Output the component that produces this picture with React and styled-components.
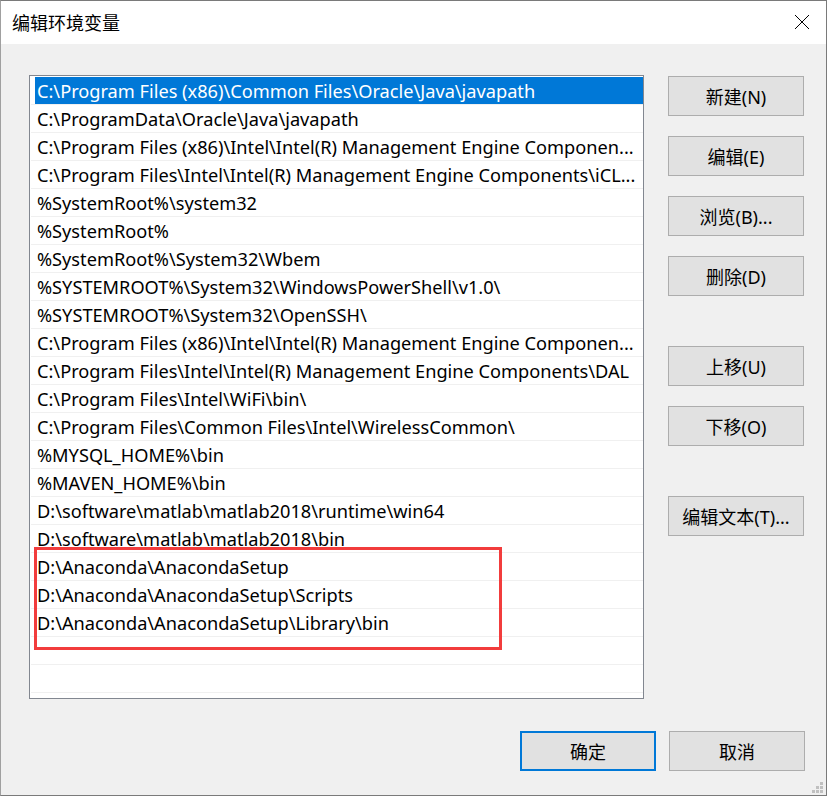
import React from 'react';
import styled, { createGlobalStyle } from 'styled-components';

const paths = [
  'C:\\Program Files (x86)\\Common Files\\Oracle\\Java\\javapath',
  'C:\\ProgramData\\Oracle\\Java\\javapath',
  'C:\\Program Files (x86)\\Intel\\Intel(R) Management Engine Componen...',
  'C:\\Program Files\\Intel\\Intel(R) Management Engine Components\\iCL...',
  '%SystemRoot%\\system32',
  '%SystemRoot%',
  '%SystemRoot%\\System32\\Wbem',
  '%SYSTEMROOT%\\System32\\WindowsPowerShell\\v1.0\\',
  '%SYSTEMROOT%\\System32\\OpenSSH\\',
  'C:\\Program Files (x86)\\Intel\\Intel(R) Management Engine Componen...',
  'C:\\Program Files\\Intel\\Intel(R) Management Engine Components\\DAL',
  'C:\\Program Files\\Intel\\WiFi\\bin\\',
  'C:\\Program Files\\Common Files\\Intel\\WirelessCommon\\',
  '%MYSQL_HOME%\\bin',
  '%MAVEN_HOME%\\bin',
  'D:\\software\\matlab\\matlab2018\\runtime\\win64',
  'D:\\software\\matlab\\matlab2018\\bin',
  'D:\\Anaconda\\AnacondaSetup',
  'D:\\Anaconda\\AnacondaSetup\\Scripts',
  'D:\\Anaconda\\AnacondaSetup\\Library\\bin',
  '',
  '',
];

const sideButtons = [
  { label: '新建(N)' },
  { label: '编辑(E)' },
  { label: '浏览(B)...' },
  { label: '删除(D)' },
  { label: '上移(U)', spaced: true },
  { label: '下移(O)' },
  { label: '编辑文本(T)...', spaced: true },
];

const App = () => (
  <>
    <GlobalStyle />
    <Window>
      <TitleBar>
        <Title>编辑环境变量</Title>
        <CloseIcon viewBox="0 0 16 16">
          <path d="M1 1 L15 15 M15 1 L1 15" stroke="#000" strokeWidth="1" fill="none" />
        </CloseIcon>
      </TitleBar>

      <Body>
        <Main>
          <ListBox>
            {paths.map((path, index) => (
              <Row key={`path_${index}`}>
                <Item selected={index === 0}>{path}</Item>
              </Row>
            ))}
            <Highlight />
          </ListBox>

          <ButtonColumn>
            {sideButtons.map(({ label, spaced }) => (
              <Button key={label} spaced={spaced}>{label}</Button>
            ))}
          </ButtonColumn>
        </Main>

        <Footer>
          <Button primary>确定</Button>
          <Button>取消</Button>
        </Footer>
      </Body>

      <Grip viewBox="0 0 11 11">
        <rect x="8" y="0" width="3" height="3" />
        <rect x="4" y="4" width="3" height="3" />
        <rect x="8" y="4" width="3" height="3" />
        <rect x="0" y="8" width="3" height="3" />
        <rect x="4" y="8" width="3" height="3" />
        <rect x="8" y="8" width="3" height="3" />
      </Grip>
    </Window>
  </>
);

const GlobalStyle = createGlobalStyle`
  html, body {
    margin: 0;
    padding: 0;
    background: #ffffff;
  }
  body {
    font-family: "Noto Sans", "Noto Sans CJK SC", sans-serif;
  }
`;

const Window = styled.div`
  position: relative;
  box-sizing: border-box;
  width: 827px;
  height: 796px;
  border: 1px solid #7a7a7a;
  border-left-color: #a0a0a0;
  background: #f0f0f0;
  display: flex;
  flex-direction: column;
`;

const TitleBar = styled.div`
  height: 43px;
  background: #ffffff;
  display: flex;
  align-items: center;
  justify-content: space-between;
  padding: 0 16px 0 11px;
`;

const Title = styled.div`
  font-size: 18px;
  color: #000;
  margin-top: -2px;
`;

const CloseIcon = styled.svg`
  width: 16px;
  height: 16px;
  margin-top: -1px;
`;

const Body = styled.div`
  flex: 1;
  display: flex;
  flex-direction: column;
  padding: 31px 21px 0 28px;
`;

const Main = styled.div`
  display: flex;
  gap: 24px;
  align-items: flex-start;
`;

const ListBox = styled.div`
  position: relative;
  box-sizing: border-box;
  width: 615px;
  height: 624px;
  border: 1px solid #828790;
  background: #ffffff;
  padding: 1px 0 0 1px;
`;

const Row = styled.div`
  height: 27px;
  border-bottom: 1px solid #f0f0f0;
  display: flex;
`;

const Item = styled.div`
  flex: 1;
  margin-left: 4px;
  padding: 2px 0 0 2px;
  font-size: 18.2px;
  line-height: 25px;
  white-space: nowrap;
  overflow: hidden;
  color: ${(p) => (p.selected ? '#ffffff' : '#000000')};
  background: ${(p) => (p.selected ? '#0078d7' : 'transparent')};
`;

const Highlight = styled.div`
  position: absolute;
  left: 4px;
  top: 471px;
  width: 462px;
  height: 97px;
  border: 3px solid #f23c3c;
`;

const ButtonColumn = styled.div`
  display: flex;
  flex-direction: column;
  gap: 20px;
  padding-top: 1px;
`;

const Button = styled.div`
  box-sizing: border-box;
  width: 136px;
  height: 40px;
  display: flex;
  align-items: center;
  justify-content: center;
  background: #e1e1e1;
  border: ${(p) => (p.primary ? '2px solid #0078d7' : '1px solid #adadad')};
  font-size: 18px;
  color: #000;
  margin-top: ${(p) => (p.spaced ? '30px' : '0')};
`;

const Footer = styled.div`
  display: flex;
  justify-content: flex-end;
  gap: 13px;
  margin-top: 32px;
`;

const Grip = styled.svg`
  position: absolute;
  right: 3px;
  bottom: 2px;
  width: 11px;
  height: 11px;
  fill: #c0c0c0;
`;

export default App;
